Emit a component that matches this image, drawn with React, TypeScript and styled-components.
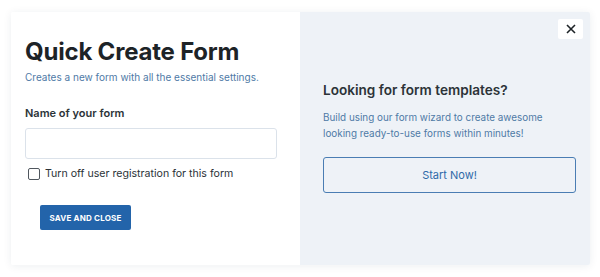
import styled, { createGlobalStyle } from "styled-components"

const GlobalStyle = createGlobalStyle`
  body {
    margin: 0;
    background: #ffffff;
    font-family: Inter, "Liberation Sans", sans-serif;
  }
`

const Page = styled.div`
  padding: 12px 10px 12px 11px;
`

const Modal = styled.div`
  position: relative;
  width: 579px;
  height: 253px;
  display: grid;
  grid-template-columns: 289px 1fr;
  box-shadow: 0 1px 8px rgba(30, 50, 80, 0.08);
  border-radius: 2px;
  overflow: hidden;
`

const LeftPanel = styled.div`
  background: #ffffff;
  padding: 25px 14px 0 14px;
  display: flex;
  flex-direction: column;
  align-items: flex-start;
`

const Title = styled.h1`
  margin: 0;
  font-size: 24px;
  line-height: 29px;
  font-weight: 700;
  color: #1d2327;
  letter-spacing: -0.2px;
`

const Subtitle = styled.p`
  margin: 4px 0 0;
  font-size: 10px;
  line-height: 14px;
  color: #4f7aa6;
`

const Label = styled.label`
  margin-top: 22px;
  font-size: 11px;
  line-height: 14px;
  font-weight: 600;
  color: #2c3338;
`

const TextInput = styled.input`
  margin-top: 8px;
  box-sizing: border-box;
  width: 252px;
  height: 31px;
  border: 1px solid #dbe2ea;
  border-radius: 3px;
  background: #fff;
  padding: 0 8px;
  outline: none;
`

const CheckRow = styled.label`
  margin: 8px 0 0 3px;
  display: flex;
  align-items: center;
  gap: 5px;
  font-size: 10.6px;
  line-height: 14px;
  color: #2c3338;
`

const Box = styled.span`
  box-sizing: border-box;
  width: 12px;
  height: 12px;
  border: 1.5px solid #50575e;
  border-radius: 2px;
  background: #fff;
`

const SaveButton = styled.button`
  margin: 24px 0 0 15px;
  width: 91px;
  height: 25px;
  border: none;
  border-radius: 2px;
  background: #2364aa;
  color: #ffffff;
  font-family: inherit;
  font-size: 8px;
  font-weight: 700;
  letter-spacing: 0.2px;
  text-transform: uppercase;
  padding: 0;
`

const RightPanel = styled.div`
  background: #eef2f7;
  padding: 69px 14px 0 23px;
  display: flex;
  flex-direction: column;
`

const PromoTitle = styled.h2`
  margin: 0;
  font-size: 13.6px;
  line-height: 18px;
  font-weight: 600;
  color: #2c3338;
`

const PromoText = styled.p`
  margin: 10px 0 0;
  font-size: 9.9px;
  line-height: 16px;
  color: #4f7aa6;
`

const OutlineButton = styled.button`
  margin-top: 16px;
  height: 36px;
  width: 100%;
  border: 1px solid #4a7db3;
  border-radius: 3px;
  background: transparent;
  color: #2e6aa8;
  font-family: inherit;
  font-size: 11px;
  padding: 0;
`

const CloseButton = styled.button`
  position: absolute;
  top: 7px;
  right: 7px;
  width: 25px;
  height: 20px;
  border: none;
  border-radius: 2px;
  background: #ffffff;
  display: flex;
  align-items: center;
  justify-content: center;
  padding: 0;
`

const App = () => {
  return (
    <Page>
      <GlobalStyle />
      <Modal>
        <LeftPanel>
          <Title>Quick Create Form</Title>
          <Subtitle>Creates a new form with all the essential settings.</Subtitle>
          <Label>Name of your form</Label>
          <TextInput type="text" />
          <CheckRow>
            <Box />
            Turn off user registration for this form
          </CheckRow>
          <SaveButton>Save and close</SaveButton>
        </LeftPanel>
        <RightPanel>
          <PromoTitle>Looking for form templates?</PromoTitle>
          <PromoText>
            Build using our form wizard to create awesome
            <br />
            looking ready-to-use forms within minutes!
          </PromoText>
          <OutlineButton>Start Now!</OutlineButton>
        </RightPanel>
        <CloseButton>
          <svg width="10" height="10" viewBox="0 0 10 10">
            <path d="M1 1L9 9M9 1L1 9" stroke="#1d2327" strokeWidth="1.6" />
          </svg>
        </CloseButton>
      </Modal>
    </Page>
  )
}

export default App
